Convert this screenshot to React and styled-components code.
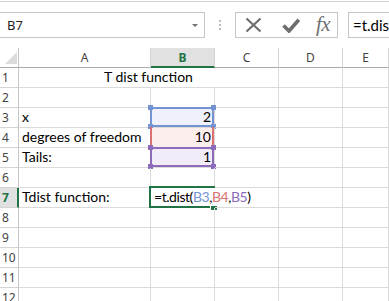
import React from "react";
import styled, { createGlobalStyle, css } from "styled-components";

const GREEN = "#217346";
const GRID = "#dadada";
const CELL_FONT = `"Lato", "Liberation Sans", sans-serif`;
const UI_FONT = `"Noto Sans", "Open Sans", sans-serif`;

const REF = {
  blue: { line: "#7393d3", fill: "#eef1fb" },
  red: { line: "#d8716f", fill: "#fdeeee" },
  purple: { line: "#8c6bbb", fill: "#f1ecf8" },
};

const Global = createGlobalStyle`
  html, body { margin: 0; padding: 0; background: #fff; }
  body { overflow: hidden; }
`;

const Window = styled.div`
  width: 389px;
  height: 301px;
  overflow: hidden;
  background: #fff;
  font-family: ${UI_FONT};
`;

const RibbonEdge = styled.div`
  height: 1px;
  border-bottom: 1px solid #d5d5d5;
`;

const FormulaBar = styled.div`
  display: flex;
  align-items: center;
  height: 26px;
  margin: 10px 0 10px -1px;
`;

const NameBox = styled.div`
  box-sizing: border-box;
  flex: 0 0 206px;
  height: 26px;
  border: 1px solid #c6c6c6;
  display: flex;
  align-items: center;
  justify-content: space-between;
  padding: 0 6px 0 7px;
  font-size: 13px;
  color: #222;
`;

const DropArrow = styled.span`
  width: 0;
  height: 0;
  border-left: 3px solid transparent;
  border-right: 3px solid transparent;
  border-top: 3px solid #707070;
`;

const Grip = styled.div`
  flex: 0 0 2px;
  display: flex;
  flex-direction: column;
  gap: 2px;
  margin: 0 14px;
`;

const GripDot = styled.span`
  width: 2px;
  height: 2px;
  background: #bcbcbc;
`;

const ButtonBox = styled.div`
  box-sizing: border-box;
  flex: 0 0 103px;
  height: 26px;
  border: 1px solid #c6c6c6;
  display: flex;
  align-items: center;
  padding-left: 9px;
`;

const IconSlot = styled.span`
  display: flex;
  align-items: center;
  margin-right: ${(p) => p.$after || 0}px;
`;

const Fx = styled.span`
  font-family: "Liberation Serif", "DejaVu Serif", serif;
  font-style: italic;
  font-size: 21px;
  line-height: 20px;
  color: #707070;
  letter-spacing: -0.5px;
  margin-top: -2px;
`;

const FormulaInput = styled.div`
  box-sizing: border-box;
  flex: 0 0 140px;
  margin-left: 10px;
  height: 26px;
  border: 1px solid #c6c6c6;
  border-right: none;
  padding-left: 4px;
  display: flex;
  align-items: center;
  font-family: ${CELL_FONT};
  font-size: 15px;
  color: #000;
  white-space: nowrap;
`;

const Sheet = styled.div`
  display: grid;
  grid-template-columns: 19px 132px 64px 64px 64px 1fr;
  grid-auto-rows: 20px;
`;

const Corner = styled.div`
  box-sizing: border-box;
  display: flex;
  align-items: flex-end;
  justify-content: flex-end;
  padding: 0 1px 3px 0;
  border-right: 1px solid #c6c6c6;
  border-bottom: 1px solid #ababab;
`;

const CornerTriangle = styled.span`
  width: 0;
  height: 0;
  border-left: 12px solid transparent;
  border-bottom: 12px solid #dcdcdc;
`;

const ColHeader = styled.div`
  box-sizing: border-box;
  display: flex;
  align-items: center;
  justify-content: center;
  border-right: 1px solid #d5d5d5;
  border-bottom: 1px solid #ababab;
  font-size: 12px;
  color: #444;
  ${(p) =>
    p.$active &&
    css`
      background: #e1e1e1;
      color: ${GREEN};
      font-weight: 700;
      border-bottom: 2px solid ${GREEN};
      padding-top: 1px;
    `}
`;

const RowHeader = styled.div`
  box-sizing: border-box;
  display: flex;
  align-items: center;
  padding-left: 2px;
  border-right: 1px solid #c6c6c6;
  border-bottom: 1px solid #d5d5d5;
  font-size: 12px;
  color: #444;
  ${(p) =>
    p.$active &&
    css`
      background: #e1e1e1;
      color: ${GREEN};
      font-weight: 700;
      border-right: 2px solid ${GREEN};
    `}
`;

const Cell = styled.div`
  box-sizing: border-box;
  position: relative;
  display: flex;
  align-items: flex-end;
  justify-content: ${(p) =>
    p.$align === "right" ? "flex-end" : p.$align === "center" ? "center" : "flex-start"};
  grid-column: span ${(p) => p.$span || 1};
  padding: 0 3px 1px;
  border-right: 1px solid ${(p) => (p.$editing ? "#fff" : GRID)};
  border-bottom: 1px solid ${GRID};
  background: ${(p) => (p.$tone ? REF[p.$tone].fill : "transparent")};
  font-family: ${CELL_FONT};
  font-size: 14px;
  line-height: 18px;
  color: #000;
  white-space: nowrap;
`;

const RangeFrame = styled.span`
  position: absolute;
  top: -1px;
  left: -1px;
  right: 0;
  bottom: 0;
  border: 2px solid ${(p) => REF[p.$tone].line};
  ${(p) => p.$open && css`border-top: none; border-bottom: none;`}
  pointer-events: none;
`;

const Handle = styled.span`
  position: absolute;
  width: 5px;
  height: 5px;
  background: ${(p) => REF[p.$tone].line};
  ${(p) => (p.$v === "top" ? "top: -3px;" : "bottom: -2px;")}
  ${(p) => (p.$h === "left" ? "left: -3px;" : "right: -2px;")}
`;

const ActiveFrame = styled.span`
  position: absolute;
  top: -2px;
  left: -2px;
  right: -1px;
  bottom: -1px;
  border: 2px solid ${GREEN};
  border-right: none;
  pointer-events: none;
`;

const FillHandle = styled.span`
  position: absolute;
  right: -3px;
  bottom: -3px;
  width: 6px;
  height: 4px;
  background: ${GREEN};
  border-left: 1px solid #fff;
`;

const EditText = styled.span`
  position: relative;
  z-index: 1;
`;

const FormulaText = styled.span`
  letter-spacing: ${(p) => (p.$tight ? "-0.45px" : "0")};
`;

const Ref = styled.span`
  color: ${(p) => REF[p.$tone].line};
`;

const CloseIcon = () => (
  <svg width="17" height="16" viewBox="0 0 17 16">
    <path d="M1.5 1.5 L15.5 14.5 M15.5 1.5 L1.5 14.5" stroke="#6e6e6e" strokeWidth="2.2" fill="none" />
  </svg>
);

const CheckIcon = () => (
  <svg width="18" height="15" viewBox="0 0 18 15">
    <path d="M1.5 7.5 L7 13 L16.8 1.8" stroke="#6e6e6e" strokeWidth="3.6" fill="none" strokeLinejoin="miter" />
  </svg>
);

const Formula = ({ tight }) => (
  <FormulaText $tight={tight}>
    =t.dist(<Ref $tone="blue">B3</Ref>,<Ref $tone="red">B4</Ref>,<Ref $tone="purple">B5</Ref>)
  </FormulaText>
);

const Corners = ({ tone }) => (
  <>
    <Handle $tone={tone} $v="top" $h="left" />
    <Handle $tone={tone} $v="top" $h="right" />
    <Handle $tone={tone} $v="bottom" $h="left" />
    <Handle $tone={tone} $v="bottom" $h="right" />
  </>
);

const COLS = ["A", "B", "C", "D", "E"];

const Blank = ({ n }) => Array.from({ length: n }, (_, i) => <Cell key={i} />);

export default function App() {
  return (
    <Window>
      <Global />
      <RibbonEdge />
      <FormulaBar>
        <NameBox>
          B7
          <DropArrow />
        </NameBox>
        <Grip>
          <GripDot />
          <GripDot />
          <GripDot />
        </Grip>
        <ButtonBox>
          <IconSlot $after={20}>
            <CloseIcon />
          </IconSlot>
          <IconSlot $after={16}>
            <CheckIcon />
          </IconSlot>
          <IconSlot>
            <Fx>fx</Fx>
          </IconSlot>
        </ButtonBox>
        <FormulaInput>
          <Formula />
        </FormulaInput>
      </FormulaBar>

      <Sheet>
        <Corner>
          <CornerTriangle />
        </Corner>
        {COLS.map((c) => (
          <ColHeader key={c} $active={c === "B"}>
            {c}
          </ColHeader>
        ))}

        <RowHeader>1</RowHeader>
        <Cell $span={3} $align="center">T dist function</Cell>
        <Blank n={2} />

        <RowHeader>2</RowHeader>
        <Blank n={5} />

        <RowHeader>3</RowHeader>
        <Cell>x</Cell>
        <Cell $align="right" $tone="blue">
          2
          <RangeFrame $tone="blue" />
          <Corners tone="blue" />
        </Cell>
        <Blank n={3} />

        <RowHeader>4</RowHeader>
        <Cell>degrees of freedom</Cell>
        <Cell $align="right" $tone="red">
          10
          <RangeFrame $tone="red" $open />
        </Cell>
        <Blank n={3} />

        <RowHeader>5</RowHeader>
        <Cell>Tails:</Cell>
        <Cell $align="right" $tone="purple">
          1
          <RangeFrame $tone="purple" />
          <Corners tone="purple" />
        </Cell>
        <Blank n={3} />

        <RowHeader>6</RowHeader>
        <Blank n={5} />

        <RowHeader $active>7</RowHeader>
        <Cell>Tdist function:</Cell>
        <Cell $editing>
          <ActiveFrame />
          <EditText>
            <Formula tight />
          </EditText>
          <FillHandle />
        </Cell>
        <Blank n={3} />

        {[8, 9, 10, 11, 12].map((r) => (
          <React.Fragment key={r}>
            <RowHeader>{r}</RowHeader>
            <Blank n={5} />
          </React.Fragment>
        ))}
      </Sheet>
    </Window>
  );
}
